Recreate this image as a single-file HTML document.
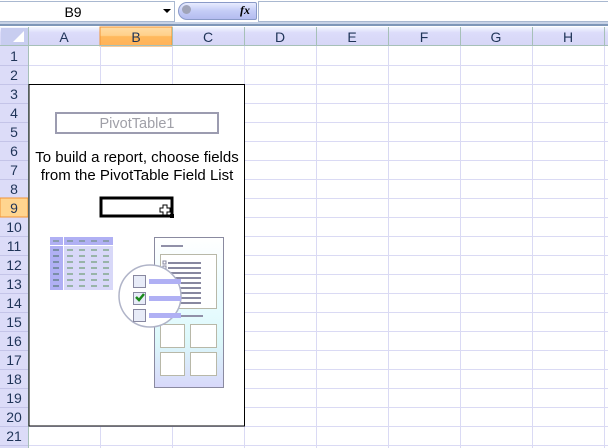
<!DOCTYPE html>
<html><head><style>
body{margin:0;width:608px;height:448px;overflow:hidden;background:#fff;font-family:"Liberation Sans",sans-serif;position:relative}
.a{position:absolute}
</style></head><body>
<div class="a" style="left:0;top:0;width:608px;height:27px;background:#fff"></div>
<div class="a" style="left:0;top:1px;width:175px;height:21px;border:1px solid #a9b8d0;border-left:none;box-sizing:border-box;font-size:14px;line-height:20px;text-align:center;padding-right:28px">B9</div>
<div class="a" style="left:163px;top:9px;width:0;height:0;border-left:4px solid transparent;border-right:4px solid transparent;border-top:4px solid #000"></div>
<div class="a" style="left:178px;top:2px;width:79px;height:18px;border:1px solid #8a9ac8;border-radius:9px 2px 2px 9px;background:linear-gradient(#e8ecff,#c4ccf6 50%,#b4bcf0);box-sizing:border-box"></div>
<div class="a" style="left:182px;top:5px;width:9px;height:9px;border-radius:50%;background:#a0a4b8"></div>
<div class="a" style="left:240px;top:3px;font-size:12px;font-style:italic;font-weight:bold;font-family:'Liberation Serif',serif">fx</div>
<div class="a" style="left:258px;top:1px;width:350px;height:21px;border:1px solid #a9b8d0;border-right:none;box-sizing:border-box"></div>
<div class="a" style="left:0;top:22px;width:608px;height:2px;background:#c7d2e6"></div>
<div class="a" style="left:0;top:24px;width:608px;height:2px;background:#7f97b8"></div>
<svg class="a" style="left:0;top:0" width="608" height="448">
<defs><linearGradient id="h" x1="0" y1="0" x2="0" y2="1"><stop offset="0" stop-color="#f4f8ff"/><stop offset=".3" stop-color="#dcdcfa"/><stop offset="1" stop-color="#d6d6f6"/></linearGradient>
<linearGradient id="hb" x1="0" y1="0" x2="0" y2="1"><stop offset="0" stop-color="#ffdca4"/><stop offset=".45" stop-color="#ffd08a"/><stop offset=".5" stop-color="#ffb95c"/><stop offset="1" stop-color="#ffb25a"/></linearGradient>
<linearGradient id="pg" x1="0" y1="0" x2="0" y2="1"><stop offset="0" stop-color="#fff"/><stop offset=".45" stop-color="#e8fcff"/><stop offset=".7" stop-color="#dcf8fa"/><stop offset="1" stop-color="#d8d8fa"/></linearGradient></defs>
<rect x="0" y="27" width="608" height="19" fill="url(#h)"/>
<rect x="0" y="46" width="29" height="402" fill="#dcdcf8"/>
<rect x="100" y="27" width="72" height="19" fill="url(#hb)" stroke="#f29436"/>
<rect x="0" y="198" width="28" height="19" fill="#ffd58f" stroke="#f29436"/>
<rect x="1" y="28" width="27" height="17" fill="#c8cdf0"/>
<polygon points="24,31 24,42 13,42" fill="#fff"/>
<g stroke="#dadaf4" stroke-width="1">
<line x1="100.5" y1="46" x2="100.5" y2="448"/><line x1="172.5" y1="46" x2="172.5" y2="448"/><line x1="244.5" y1="46" x2="244.5" y2="448"/><line x1="316.5" y1="46" x2="316.5" y2="448"/><line x1="388.5" y1="46" x2="388.5" y2="448"/><line x1="460.5" y1="46" x2="460.5" y2="448"/><line x1="532.5" y1="46" x2="532.5" y2="448"/><line x1="604.5" y1="46" x2="604.5" y2="448"/>
</g>
<g stroke="#dadaf4">
<line x1="29" y1="65.5" x2="608" y2="65.5"/><line x1="29" y1="84.5" x2="608" y2="84.5"/><line x1="29" y1="103.5" x2="608" y2="103.5"/><line x1="29" y1="122.5" x2="608" y2="122.5"/><line x1="29" y1="141.5" x2="608" y2="141.5"/><line x1="29" y1="160.5" x2="608" y2="160.5"/><line x1="29" y1="179.5" x2="608" y2="179.5"/><line x1="29" y1="198.5" x2="608" y2="198.5"/><line x1="29" y1="217.5" x2="608" y2="217.5"/><line x1="29" y1="236.5" x2="608" y2="236.5"/><line x1="29" y1="255.5" x2="608" y2="255.5"/><line x1="29" y1="274.5" x2="608" y2="274.5"/><line x1="29" y1="293.5" x2="608" y2="293.5"/><line x1="29" y1="312.5" x2="608" y2="312.5"/><line x1="29" y1="331.5" x2="608" y2="331.5"/><line x1="29" y1="350.5" x2="608" y2="350.5"/><line x1="29" y1="369.5" x2="608" y2="369.5"/><line x1="29" y1="388.5" x2="608" y2="388.5"/><line x1="29" y1="407.5" x2="608" y2="407.5"/><line x1="29" y1="426.5" x2="608" y2="426.5"/><line x1="29" y1="445.5" x2="608" y2="445.5"/>
</g>
<g stroke="#a6c0b8">
<line x1="28.5" y1="27" x2="28.5" y2="448"/><line x1="0" y1="45.5" x2="608" y2="45.5"/>
<line x1="172.5" y1="27" x2="172.5" y2="46"/><line x1="244.5" y1="27" x2="244.5" y2="46"/><line x1="316.5" y1="27" x2="316.5" y2="46"/><line x1="388.5" y1="27" x2="388.5" y2="46"/><line x1="460.5" y1="27" x2="460.5" y2="46"/><line x1="532.5" y1="27" x2="532.5" y2="46"/><line x1="604.5" y1="27" x2="604.5" y2="46"/>
</g>
<g stroke="#c4c4e8"><line x1="0" y1="65.5" x2="28" y2="65.5"/><line x1="0" y1="84.5" x2="28" y2="84.5"/><line x1="0" y1="103.5" x2="28" y2="103.5"/><line x1="0" y1="122.5" x2="28" y2="122.5"/><line x1="0" y1="141.5" x2="28" y2="141.5"/><line x1="0" y1="160.5" x2="28" y2="160.5"/><line x1="0" y1="179.5" x2="28" y2="179.5"/><line x1="0" y1="236.5" x2="28" y2="236.5"/><line x1="0" y1="255.5" x2="28" y2="255.5"/><line x1="0" y1="274.5" x2="28" y2="274.5"/><line x1="0" y1="293.5" x2="28" y2="293.5"/><line x1="0" y1="312.5" x2="28" y2="312.5"/><line x1="0" y1="331.5" x2="28" y2="331.5"/><line x1="0" y1="350.5" x2="28" y2="350.5"/><line x1="0" y1="369.5" x2="28" y2="369.5"/><line x1="0" y1="388.5" x2="28" y2="388.5"/><line x1="0" y1="407.5" x2="28" y2="407.5"/><line x1="0" y1="426.5" x2="28" y2="426.5"/><line x1="0" y1="445.5" x2="28" y2="445.5"/></g>
<g font-family="Liberation Sans" font-size="14" fill="#1f3458" text-anchor="middle">
<text x="64" y="42">A</text><text x="136" y="42">B</text><text x="208" y="42">C</text><text x="280" y="42">D</text><text x="352" y="42">E</text><text x="424" y="42">F</text><text x="496" y="42">G</text><text x="568" y="42">H</text>
<text x="14" y="61">1</text><text x="14" y="80">2</text><text x="14" y="99">3</text><text x="14" y="118">4</text><text x="14" y="137">5</text><text x="14" y="156">6</text><text x="14" y="175">7</text><text x="14" y="194">8</text><text x="14" y="213">9</text><text x="14" y="232">10</text><text x="14" y="251">11</text><text x="14" y="270">12</text><text x="14" y="289">13</text><text x="14" y="308">14</text><text x="14" y="327">15</text><text x="14" y="346">16</text><text x="14" y="365">17</text><text x="14" y="384">18</text><text x="14" y="403">19</text><text x="14" y="422">20</text><text x="14" y="441">21</text>
</g>
<rect x="29" y="84.5" width="215.5" height="341.5" fill="#fff" stroke="#000"/>
<rect x="56" y="113" width="162" height="20" fill="#fff" stroke="#9c9cb0" stroke-width="2"/>
<g font-family="Liberation Sans" font-size="15" text-anchor="middle">
<text x="137" y="128" fill="#a0a0a8" font-size="14.5">PivotTable1</text>
<text x="137" y="162" fill="#000">To build a report, choose fields</text>
<text x="137" y="180" fill="#000">from the PivotTable Field List</text>
</g>
<rect x="101" y="198" width="71" height="18" fill="none" stroke="#000" stroke-width="3"/>
<rect x="170" y="214" width="4" height="4" fill="#000"/>
<path d="M163 205h4v3h3v4h-3v3h-4v-3h-3v-4h3z" fill="#fff" stroke="#000"/>
<rect x="50" y="237" width="63" height="53" fill="#d8d8f8"/>
<rect x="50" y="237" width="13" height="53" fill="#b0b0f4"/>
<rect x="50" y="237" width="63" height="8" fill="#b0b0f4"/>
<line x1="63.5" y1="237" x2="63.5" y2="290" stroke="#fff"/><line x1="50" y1="245.5" x2="113" y2="245.5" stroke="#fff"/>
<g stroke="#8a9cb0" stroke-width="2"><path d="M53 241h6M67 241h6M79 241h6M91 241h6M103 241h6"/></g>
<g stroke="#7a8ea8" stroke-width="2"><path d="M53 250h6M53 256h6M53 262h6M53 268h6M53 274h6M53 280h6M53 286h6"/></g>
<g stroke="#98b4a8" stroke-width="2"><path d="M67 250h6m6 0h6m6 0h6m6 0h6M67 256h6m6 0h6m6 0h6m6 0h6M67 262h6m6 0h6m6 0h6m6 0h6M67 268h6m6 0h6m6 0h6m6 0h6M67 274h6m6 0h6m6 0h6m6 0h6M67 280h6m6 0h6m6 0h6m6 0h6M67 286h6m6 0h6m6 0h6m6 0h6"/></g>
<rect x="154.5" y="237.5" width="69" height="150" fill="url(#pg)" stroke="#8a8aa0"/>
<path d="M161 246h22" stroke="#9090a8" stroke-width="2"/>
<rect x="160.5" y="254.5" width="56" height="54" fill="#fff" stroke="#b8b8a8"/>
<g stroke="#8888a0" stroke-width="2"><path d="M168 263h33M168 268h33M168 273h33M168 278h33M168 283h33M168 288h33M168 293h33M168 298h33M168 303h33"/></g>
<rect x="163" y="261" width="3" height="3" fill="none" stroke="#8888a0"/><rect x="163" y="266" width="3" height="3" fill="none" stroke="#8888a0"/>
<path d="M176 316h27" stroke="#9090a8" stroke-width="2"/>
<g fill="#fff" stroke="#b8b8a8"><rect x="160.5" y="324.5" width="24" height="23"/><rect x="190.5" y="324.5" width="26" height="23"/><rect x="160.5" y="352.5" width="24" height="23"/><rect x="190.5" y="352.5" width="26" height="23"/></g>
<circle cx="150" cy="296" r="31" fill="#fff" stroke="#b0b4c8" stroke-width="1.5"/>
<g fill="#e8ecf8" stroke="#8888a0"><rect x="133.5" y="275.5" width="12" height="12"/><rect x="133.5" y="292.5" width="12" height="12"/><rect x="133.5" y="309.5" width="12" height="12"/></g>
<g fill="#b0b0f4"><rect x="149" y="279" width="32" height="5"/><rect x="149" y="296" width="32" height="5"/><rect x="149" y="313" width="32" height="5"/></g>
<path d="M136 297l3 3 5-6" stroke="#1a8a1a" stroke-width="2.5" fill="none"/>
</svg>
</body></html>
